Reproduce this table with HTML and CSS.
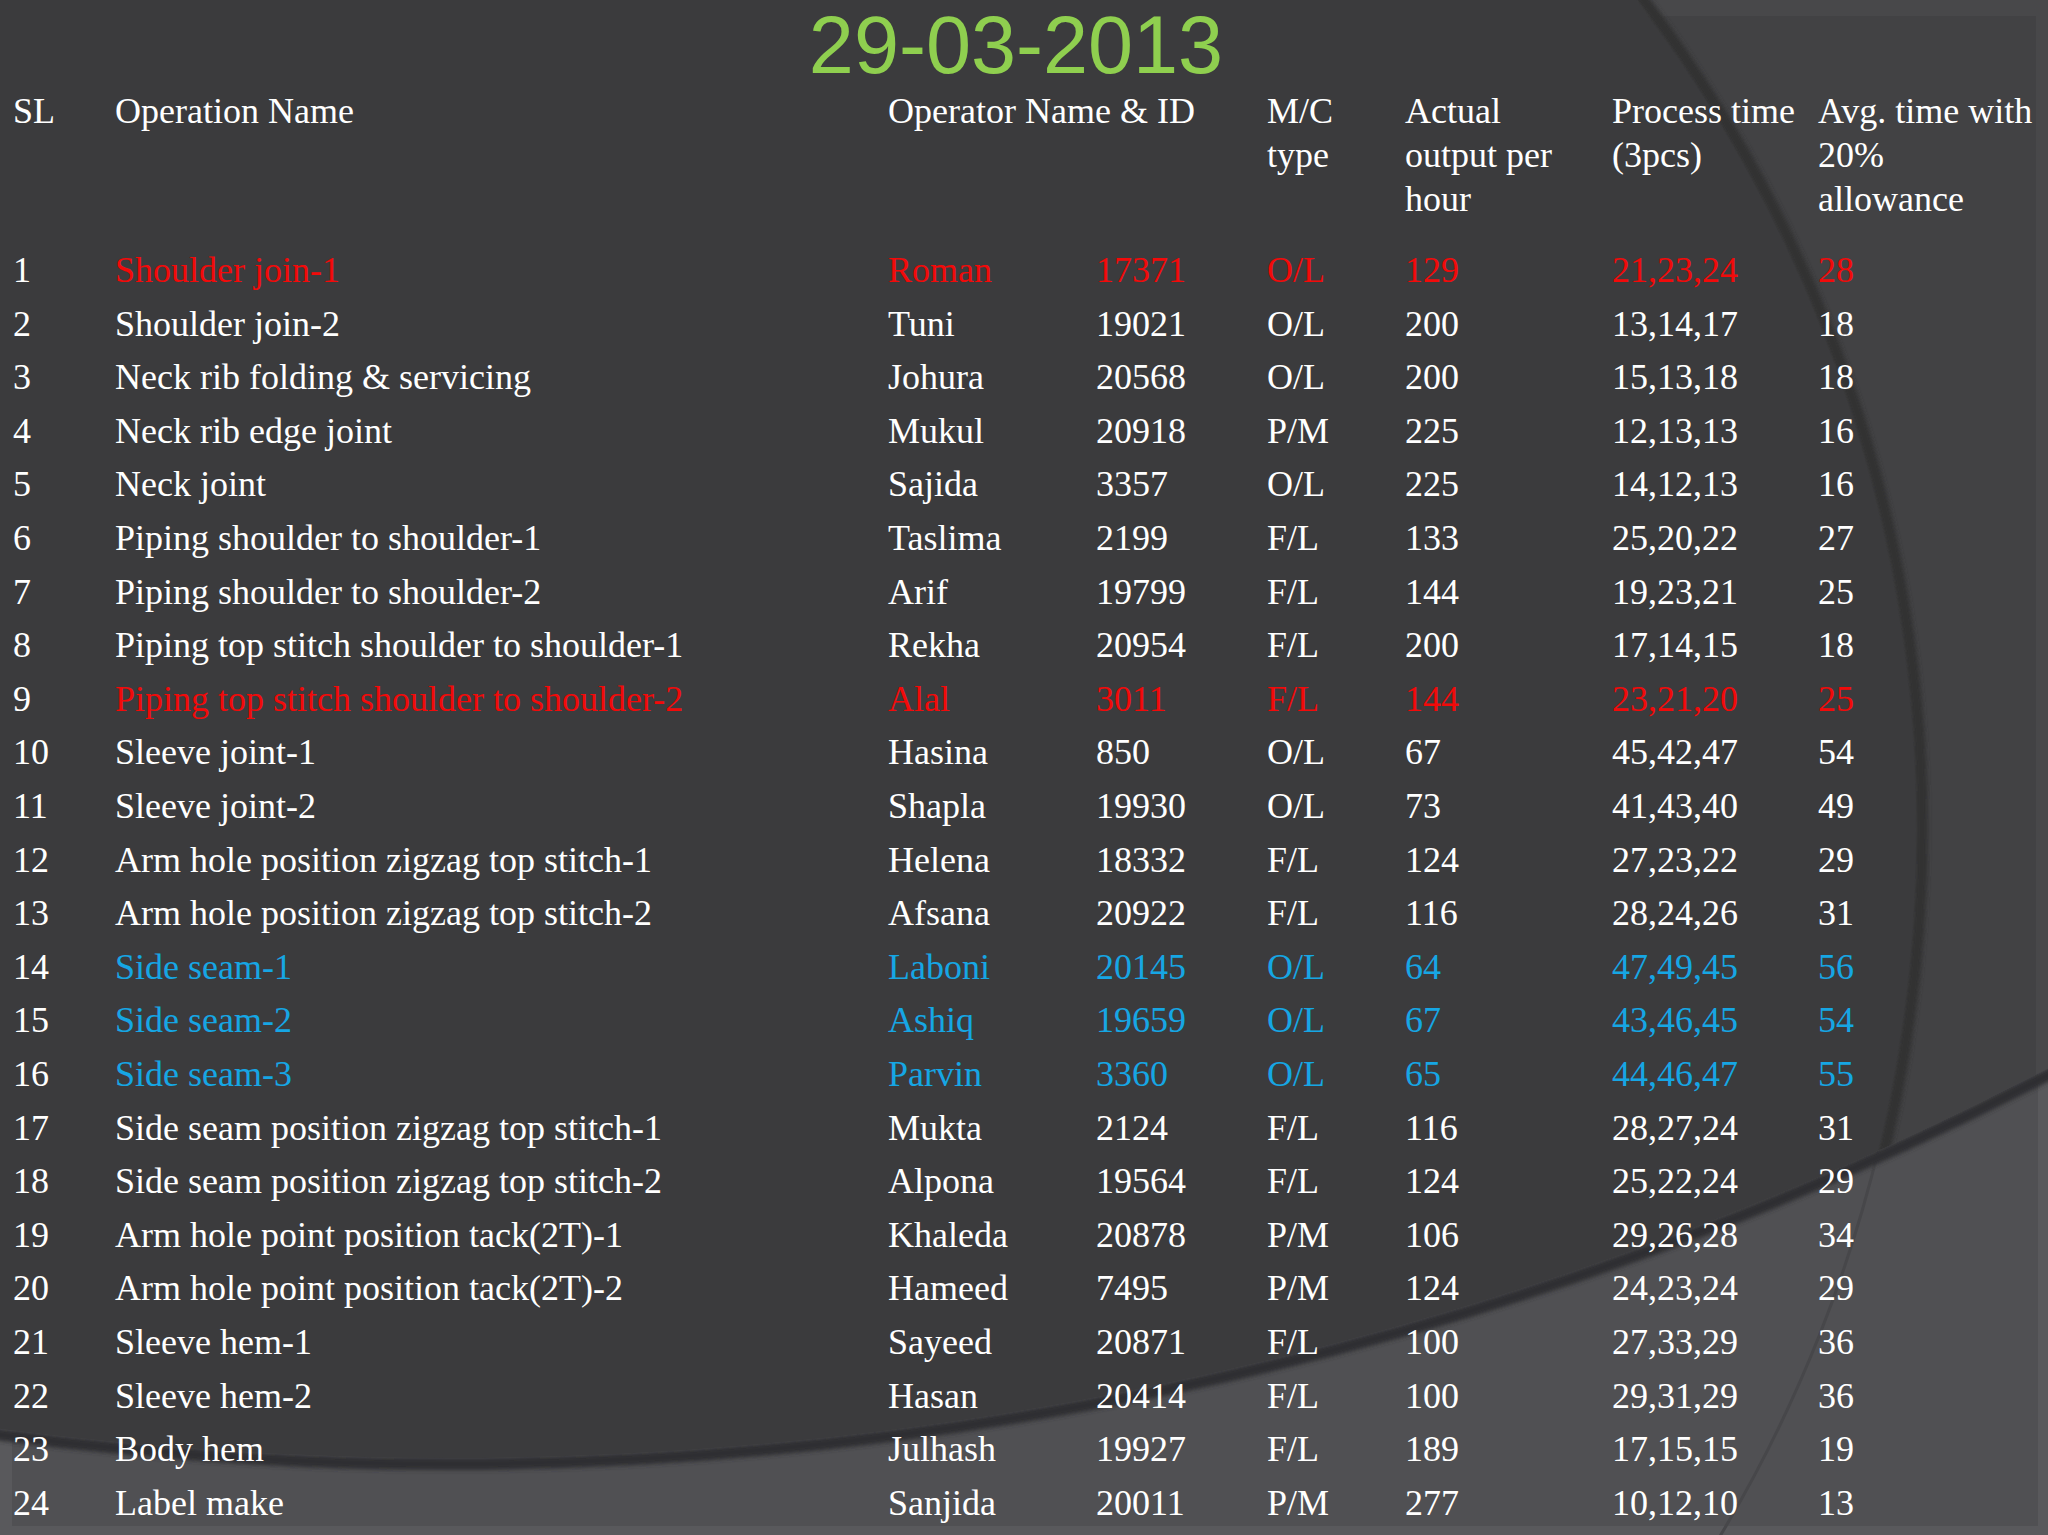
FILE: index.html
```html
<!DOCTYPE html>
<html>
<head>
<meta charset="utf-8">
<link rel="stylesheet" href="styles.css">
</head>
<body>
<div class="slide">
  <svg class="bg" viewBox="0 0 2048 1535" width="2048" height="1535" aria-hidden="true">
    <defs>
      <clipPath id="cb"><circle cx="450" cy="-2014" r="3472"/></clipPath>
      <filter id="soft" x="-5%" y="-5%" width="110%" height="110%"><feGaussianBlur stdDeviation="2"/></filter>
    </defs>
    <rect width="2048" height="1535" fill="#59595c"/>
    <rect x="12" y="0" width="2026" height="1526" fill="#505053"/>
    <circle cx="546" cy="830" r="1370" fill="none" stroke="#47474a" stroke-width="3"/>
    <circle cx="450" cy="-2014" r="3478" fill="none" stroke="#2f2f31" stroke-width="12" filter="url(#soft)"/>
    <g clip-path="url(#cb)">
      <rect width="2048" height="1535" fill="#48484a"/>
      <rect x="0" y="16" width="2036" height="1519" fill="#424244"/>
      <circle cx="546" cy="830" r="1376" fill="none" stroke="#313133" stroke-width="12" filter="url(#soft)"/>
      <circle cx="546" cy="830" r="1370" fill="#3b3b3d"/>
    </g>
  </svg>

  <div class="content">
    <h1 class="title">29-03-2013</h1>

    <div class="grid">
      <div class="row head">
        <span>SL</span>
        <span>Operation Name</span>
        <span class="span2">Operator Name &amp; ID</span>
        <span>M/C<br>type</span>
        <span>Actual<br>output per<br>hour</span>
        <span>Process time<br>(3pcs)</span>
        <span>Avg. time with<br>20%<br>allowance</span>
      </div>

      <div class="row red"><span class="sl">1</span><span>Shoulder join-1</span><span>Roman</span><span>17371</span><span>O/L</span><span>129</span><span>21,23,24</span><span>28</span></div>
      <div class="row"><span class="sl">2</span><span>Shoulder join-2</span><span>Tuni</span><span>19021</span><span>O/L</span><span>200</span><span>13,14,17</span><span>18</span></div>
      <div class="row"><span class="sl">3</span><span>Neck rib folding &amp; servicing</span><span>Johura</span><span>20568</span><span>O/L</span><span>200</span><span>15,13,18</span><span>18</span></div>
      <div class="row"><span class="sl">4</span><span>Neck rib edge joint</span><span>Mukul</span><span>20918</span><span>P/M</span><span>225</span><span>12,13,13</span><span>16</span></div>
      <div class="row"><span class="sl">5</span><span>Neck joint</span><span>Sajida</span><span>3357</span><span>O/L</span><span>225</span><span>14,12,13</span><span>16</span></div>
      <div class="row"><span class="sl">6</span><span>Piping shoulder to shoulder-1</span><span>Taslima</span><span>2199</span><span>F/L</span><span>133</span><span>25,20,22</span><span>27</span></div>
      <div class="row"><span class="sl">7</span><span>Piping shoulder to shoulder-2</span><span>Arif</span><span>19799</span><span>F/L</span><span>144</span><span>19,23,21</span><span>25</span></div>
      <div class="row"><span class="sl">8</span><span>Piping top stitch shoulder to shoulder-1</span><span>Rekha</span><span>20954</span><span>F/L</span><span>200</span><span>17,14,15</span><span>18</span></div>
      <div class="row red"><span class="sl">9</span><span>Piping top stitch shoulder to shoulder-2</span><span>Alal</span><span>3011</span><span>F/L</span><span>144</span><span>23,21,20</span><span>25</span></div>
      <div class="row"><span class="sl">10</span><span>Sleeve joint-1</span><span>Hasina</span><span>850</span><span>O/L</span><span>67</span><span>45,42,47</span><span>54</span></div>
      <div class="row"><span class="sl">11</span><span>Sleeve joint-2</span><span>Shapla</span><span>19930</span><span>O/L</span><span>73</span><span>41,43,40</span><span>49</span></div>
      <div class="row"><span class="sl">12</span><span>Arm hole position zigzag top stitch-1</span><span>Helena</span><span>18332</span><span>F/L</span><span>124</span><span>27,23,22</span><span>29</span></div>
      <div class="row"><span class="sl">13</span><span>Arm hole position zigzag top stitch-2</span><span>Afsana</span><span>20922</span><span>F/L</span><span>116</span><span>28,24,26</span><span>31</span></div>
      <div class="row blue"><span class="sl">14</span><span>Side seam-1</span><span>Laboni</span><span>20145</span><span>O/L</span><span>64</span><span>47,49,45</span><span>56</span></div>
      <div class="row blue"><span class="sl">15</span><span>Side seam-2</span><span>Ashiq</span><span>19659</span><span>O/L</span><span>67</span><span>43,46,45</span><span>54</span></div>
      <div class="row blue"><span class="sl">16</span><span>Side seam-3</span><span>Parvin</span><span>3360</span><span>O/L</span><span>65</span><span>44,46,47</span><span>55</span></div>
      <div class="row"><span class="sl">17</span><span>Side seam position zigzag top stitch-1</span><span>Mukta</span><span>2124</span><span>F/L</span><span>116</span><span>28,27,24</span><span>31</span></div>
      <div class="row"><span class="sl">18</span><span>Side seam position zigzag top stitch-2</span><span>Alpona</span><span>19564</span><span>F/L</span><span>124</span><span>25,22,24</span><span>29</span></div>
      <div class="row"><span class="sl">19</span><span>Arm hole point position tack(2T)-1</span><span>Khaleda</span><span>20878</span><span>P/M</span><span>106</span><span>29,26,28</span><span>34</span></div>
      <div class="row"><span class="sl">20</span><span>Arm hole point position tack(2T)-2</span><span>Hameed</span><span>7495</span><span>P/M</span><span>124</span><span>24,23,24</span><span>29</span></div>
      <div class="row"><span class="sl">21</span><span>Sleeve hem-1</span><span>Sayeed</span><span>20871</span><span>F/L</span><span>100</span><span>27,33,29</span><span>36</span></div>
      <div class="row"><span class="sl">22</span><span>Sleeve hem-2</span><span>Hasan</span><span>20414</span><span>F/L</span><span>100</span><span>29,31,29</span><span>36</span></div>
      <div class="row"><span class="sl">23</span><span>Body hem</span><span>Julhash</span><span>19927</span><span>F/L</span><span>189</span><span>17,15,15</span><span>19</span></div>
      <div class="row"><span class="sl">24</span><span>Label make</span><span>Sanjida</span><span>20011</span><span>P/M</span><span>277</span><span>10,12,10</span><span>13</span></div>
    </div>
  </div>
</div>
</body>
</html>
```

FILE: styles.css
```css
html, body {
  margin: 0;
  padding: 0;
  background: #3b3b3d;
}

.slide {
  position: relative;
  width: 2048px;
  height: 1535px;
  overflow: hidden;
  background: #3b3b3d;
}

.bg {
  position: absolute;
  left: 0;
  top: 0;
  z-index: 0;
  display: block;
}

.content {
  position: relative;
  z-index: 1;
}

.title {
  margin: 0 0 -2px 0;
  padding: 0 16px 0 0;
  font-family: "Liberation Sans", Arial, sans-serif;
  font-weight: normal;
  font-size: 81px;
  line-height: 91px;
  color: #8fcf4f;
  text-align: center;
}

.grid {
  font-family: "Liberation Serif", "Times New Roman", serif;
  font-size: 36px;
  color: #ffffff;
}

.row {
  display: grid;
  grid-template-columns: 102px 773px 208px 171px 138px 207px 206px 1fr;
  padding-left: 13px;
  line-height: 53.6px;
  white-space: nowrap;
}

.row.head {
  line-height: 44.2px;
  margin-bottom: 22.5px;
}

.row.head .span2 {
  grid-column: span 2;
}

.row.red {
  color: #f20a0a;
}

.row.blue {
  color: #16a6e4;
}

.row .sl {
  color: #ffffff;
}
```
